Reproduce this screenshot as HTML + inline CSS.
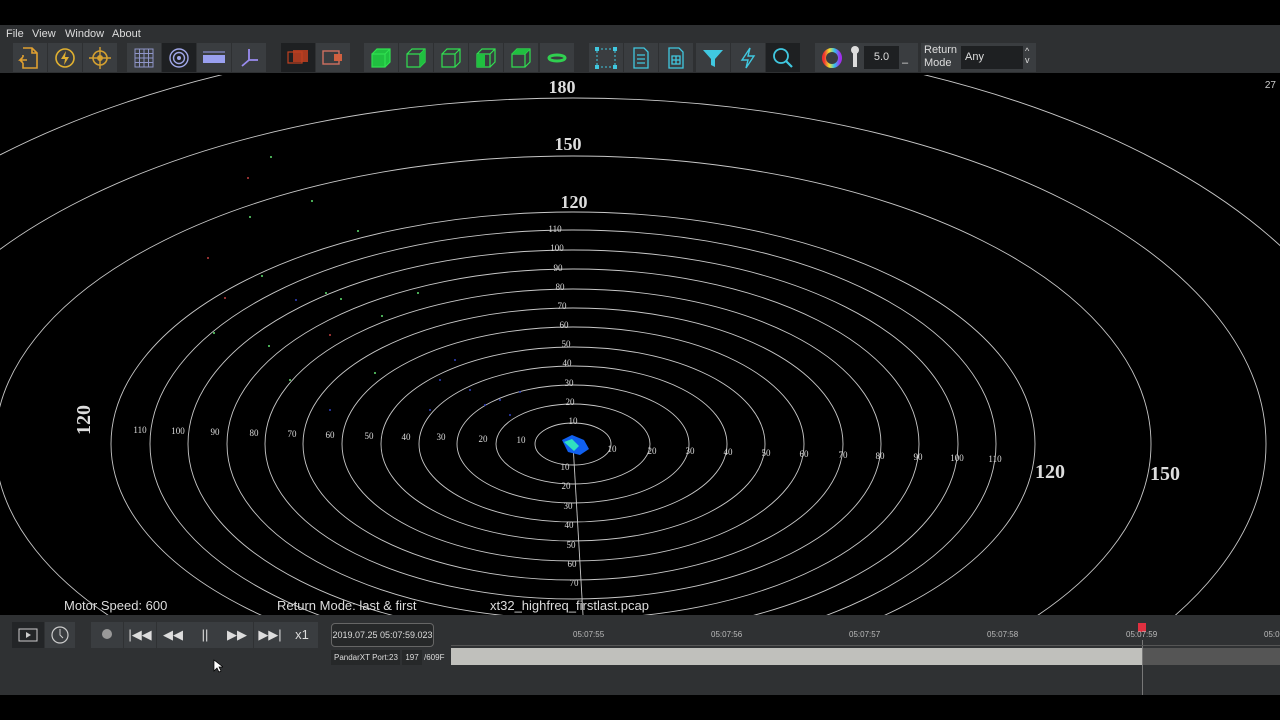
<!DOCTYPE html>
<html style="overflow:hidden;width:1280px;height:720px"><head><meta charset="utf-8"><style>
*{margin:0;padding:0;box-sizing:border-box}
body{width:1280px;height:720px;background:#000;overflow:hidden;font-family:"Liberation Sans",sans-serif;position:relative}
.menu{position:absolute;top:25px;left:0;width:1280px;height:17px;background:#2e3032;color:#ddd;font-size:11px}
.menu span{position:absolute;top:3px}
.tb{position:absolute;top:42px;left:0;width:1280px;height:31px;background:#2e3032}
.b{position:absolute;top:1px;width:34px;height:29px;background:#3a3d40}
.b svg{position:absolute;left:5px;top:3px}
.bottom{position:absolute;top:615px;left:0;width:1280px;height:80px;background:#2f3133}
.ov{position:absolute;color:#ddd;font-size:13px;top:598px}
.pb{position:absolute;top:622px;width:32px;height:26px;background:#3a3d40;color:#ddd;text-align:center;font-size:13px;line-height:26px}
</style></head><body>
<div class="menu"><span style="left:6px">File</span><span style="left:32px">View</span><span style="left:65px">Window</span><span style="left:112px">About</span></div>
<div class="tb">
<div class="b" style="left:13px"><svg width="24" height="24"><path d="M5 2h9l5 5v15H5v-5M5 11v-2" fill="none" stroke="#e0a030" stroke-width="1.6"/><path d="M14 2v5h5M9 14h-7l3-3M2 14l3 3" fill="none" stroke="#e0a030" stroke-width="1.6"/></svg></div>
<div class="b" style="left:48px"><svg width="24" height="24"><circle cx="12" cy="12" r="9" fill="none" stroke="#e0b030" stroke-width="1.6"/><path d="M13 5l-5 8h4l-1 6 5-8h-4z" fill="#e0b030"/></svg></div>
<div class="b" style="left:83px"><svg width="24" height="24"><circle cx="12" cy="12" r="7" fill="none" stroke="#d4a030" stroke-width="1.6"/><circle cx="12" cy="12" r="3" fill="#d4a030"/><path d="M12 1v22M1 12h22" stroke="#d4a030" stroke-width="1.4"/></svg></div>
<div class="b" style="left:127px"><svg width="24" height="24"><path d="M3 3h18v18H3zM7.5 3v18M12 3v18M16.5 3v18M3 7.5h18M3 12h18M3 16.5h18" fill="none" stroke="#8f95c8" stroke-width="1"/></svg></div>
<div class="b" style="left:162px;background:#1e2022"><svg width="24" height="24"><circle cx="12" cy="12" r="9" fill="none" stroke="#a0a6e8" stroke-width="1.4"/><circle cx="12" cy="12" r="5.5" fill="none" stroke="#a0a6e8" stroke-width="1.4"/><circle cx="12" cy="12" r="2" fill="#a0a6e8"/></svg></div>
<div class="b" style="left:197px"><svg width="24" height="24"><rect x="1" y="9" width="22" height="8" fill="#9aa0f0"/><path d="M1 6h22" stroke="#9aa0f0"/></svg></div>
<div class="b" style="left:232px"><svg width="24" height="24"><path d="M12 3v11l-7 6M12 14h9" fill="none" stroke="#9a8cf0" stroke-width="1.8"/></svg></div>
<div class="b" style="left:281px;background:#1e2022"><svg width="24" height="24"><rect x="2" y="6" width="14" height="11" fill="none" stroke="#c04020" stroke-width="1.2"/><rect x="7" y="4" width="15" height="12" fill="#c04020" opacity=".85"/></svg></div>
<div class="b" style="left:316px"><svg width="24" height="24"><rect x="2" y="5" width="16" height="13" fill="none" stroke="#d07060" stroke-width="1.4"/><rect x="13" y="8" width="8" height="7" fill="#d06040"/></svg></div>
<div class="b" style="left:364px"><svg width="24" height="24"><path d="M3 8h13v13H3zM3 8l5-5h13v13l-5 5M16 8l5-5" fill="#20c040" stroke="#30e050" stroke-width="1.2"/></svg></div>
<div class="b" style="left:399px"><svg width="24" height="24"><path d="M3 8h13v13H3zM3 8l5-5h13v13l-5 5M16 8l5-5" fill="none" stroke="#30e050" stroke-width="1.2"/><path d="M16 8l5-5v13l-5 5z" fill="#20c040"/></svg></div>
<div class="b" style="left:434px"><svg width="24" height="24"><path d="M3 8h13v13H3zM3 8l5-5h13v13l-5 5M16 8l5-5" fill="none" stroke="#30e050" stroke-width="1.2"/></svg></div>
<div class="b" style="left:469px"><svg width="24" height="24"><path d="M3 8h13v13H3zM3 8l5-5h13v13l-5 5M16 8l5-5" fill="none" stroke="#30e050" stroke-width="1.2"/><path d="M3 8h8v13H3z" fill="#20c040"/></svg></div>
<div class="b" style="left:504px"><svg width="24" height="24"><path d="M3 8h13v13H3zM3 8l5-5h13v13l-5 5M16 8l5-5" fill="none" stroke="#30e050" stroke-width="1.2"/><path d="M3 8l5-5h13l-5 5z" fill="#20c040"/></svg></div>
<div class="b" style="left:540px"><svg width="24" height="24"><path d="M4 12c0-4 16-4 16 0M20 12c0 4-16 4-16 0" fill="none" stroke="#30d050" stroke-width="3"/></svg></div>
<div class="b" style="left:589px"><svg width="24" height="24"><rect x="3" y="3" width="18" height="18" fill="none" stroke="#40c8e0" stroke-dasharray="2 2"/><g fill="#40c8e0"><rect x="1" y="1" width="4" height="4"/><rect x="19" y="1" width="4" height="4"/><rect x="1" y="19" width="4" height="4"/><rect x="19" y="19" width="4" height="4"/></g></svg></div>
<div class="b" style="left:624px"><svg width="24" height="24"><path d="M5 2h10l4 4v16H5z M8 9h8M8 13h8M8 17h8" fill="none" stroke="#40c8e0" stroke-width="1.3"/></svg></div>
<div class="b" style="left:659px"><svg width="24" height="24"><path d="M5 2h10l4 4v16H5z M8 10h8v8H8zM12 10v8M8 14h8" fill="none" stroke="#40c8e0" stroke-width="1.3"/></svg></div>
<div class="b" style="left:696px"><svg width="24" height="24"><path d="M2 4h20l-8 9v8l-4-2v-6z" fill="#40c8e0"/></svg></div>
<div class="b" style="left:731px"><svg width="24" height="24"><path d="M14 2L6 14h6l-2 8 8-12h-6z" fill="none" stroke="#40c8e0" stroke-width="1.4"/></svg></div>
<div class="b" style="left:766px;background:#1e2022"><svg width="24" height="24"><circle cx="10" cy="10" r="7" fill="none" stroke="#40c8e0" stroke-width="1.8"/><path d="M15 15l6 6" stroke="#40c8e0" stroke-width="2.2"/></svg></div>
<div class="b" style="left:815px;width:103px"><svg width="24" height="24"><circle cx="12" cy="12" r="8" fill="none" stroke="url(#g)" stroke-width="4"/><defs><linearGradient id="g"><stop offset="0" stop-color="#f03030"/><stop offset=".33" stop-color="#f0e030"/><stop offset=".66" stop-color="#30c0f0"/><stop offset="1" stop-color="#a030f0"/></linearGradient></defs></svg>
<div style="position:absolute;left:38px;top:6px;width:4px;height:18px;background:#ddd"></div><div style="position:absolute;left:36px;top:3px;width:8px;height:8px;border-radius:4px;background:#ddd"></div>
<div style="position:absolute;left:49px;top:3px;width:35px;height:23px;background:#1e2022;color:#ddd;font-size:11px;line-height:23px;text-align:center">5.0</div>
<div style="position:absolute;left:87px;top:14px;color:#ddd;font-size:11px">–</div></div>
<div class="b" style="left:921px;width:115px;color:#ddd;font-size:11px"><div style="position:absolute;left:3px;top:1px;line-height:13px">Return<br>Mode</div><div style="position:absolute;left:40px;top:3px;width:62px;height:23px;background:#1e2022;padding:5px 4px">Any</div><div style="position:absolute;left:104px;top:4px;font-size:9px;line-height:9px">^<br>v</div></div>
</div>
<div style="position:absolute;top:80px;right:4px;color:#ccc;font-size:10px">27</div>
<svg style="position:absolute;left:0;top:75px" width="1280" height="540" viewBox="0 75 1280 540">
<g fill="none" stroke="#c8c8c8" stroke-width="0.9">
<ellipse cx="573" cy="444" rx="38" ry="21"/><ellipse cx="573" cy="444" rx="77" ry="40"/><ellipse cx="573" cy="444" rx="116" ry="59"/><ellipse cx="573" cy="444" rx="154" ry="78"/><ellipse cx="573" cy="444" rx="192" ry="97"/><ellipse cx="573" cy="444" rx="231" ry="117"/><ellipse cx="573" cy="444" rx="270" ry="136"/><ellipse cx="573" cy="444" rx="308" ry="155"/><ellipse cx="573" cy="444" rx="346" ry="175"/><ellipse cx="573" cy="444" rx="385" ry="194"/><ellipse cx="573" cy="444" rx="423" ry="214"/>
<ellipse cx="573" cy="444" rx="462" ry="232"/><ellipse cx="573" cy="444" rx="578" ry="288"/><ellipse cx="573" cy="444" rx="693" ry="346"/><ellipse cx="573" cy="444" rx="808" ry="410"/>
<path d="M573 444L583 615"/></g>
<g fill="#ddd" font-family="Liberation Serif,serif" font-size="9" text-anchor="middle">
<text x="573" y="424">10</text><text x="570" y="405">20</text><text x="569" y="386">30</text><text x="567" y="366">40</text><text x="566" y="347">50</text><text x="564" y="328">60</text><text x="562" y="309">70</text><text x="560" y="290">80</text><text x="558" y="271">90</text><text x="557" y="251">100</text><text x="555" y="232">110</text>
<text x="565" y="470">10</text><text x="566" y="489">20</text><text x="568" y="509">30</text><text x="569" y="528">40</text><text x="571" y="548">50</text><text x="572" y="567">60</text><text x="574" y="586">70</text>
<text x="612" y="452">10</text><text x="652" y="454">20</text><text x="690" y="454">30</text><text x="728" y="455">40</text><text x="766" y="456">50</text><text x="804" y="457">60</text><text x="843" y="458">70</text><text x="880" y="459">80</text><text x="918" y="460">90</text><text x="957" y="461">100</text><text x="995" y="462">110</text>
<text x="521" y="443">10</text><text x="483" y="442">20</text><text x="441" y="440">30</text><text x="406" y="440">40</text><text x="369" y="439">50</text><text x="330" y="438">60</text><text x="292" y="437">70</text><text x="254" y="436">80</text><text x="215" y="435">90</text><text x="178" y="434">100</text><text x="140" y="433">110</text>
</g>
<g fill="#ddd" font-family="Liberation Serif,serif" font-weight="bold" font-size="18" text-anchor="middle">
<text x="562" y="93">180</text><text x="568" y="150">150</text><text x="574" y="208">120</text>
<text x="1050" y="478" font-size="20">120</text><text x="1165" y="480" font-size="20">150</text><text x="90" y="420" font-size="20" transform="rotate(-90 90 420)">120</text>
</g>
<g>
<path d="M562 440l10-5 12 5 5 9-9 6-12-3z" fill="#1060f0"/><path d="M564 442l8-3 7 7-5 5z" fill="#30e0c0"/>
<g fill="#60e070"><circle cx="271" cy="157" r="1"/><circle cx="312" cy="201" r="1"/><circle cx="250" cy="217" r="1"/><circle cx="358" cy="231" r="1"/><circle cx="262" cy="276" r="1"/><circle cx="326" cy="293" r="1"/><circle cx="341" cy="299" r="1"/><circle cx="382" cy="316" r="1"/><circle cx="269" cy="346" r="1"/><circle cx="290" cy="380" r="1"/><circle cx="375" cy="373" r="1"/><circle cx="418" cy="293" r="1"/><circle cx="214" cy="333" r="1"/></g>
<g fill="#3040c0"><circle cx="440" cy="380" r="1"/><circle cx="470" cy="390" r="1"/><circle cx="500" cy="400" r="1"/><circle cx="520" cy="392" r="1"/><circle cx="455" cy="360" r="1"/><circle cx="430" cy="410" r="1"/><circle cx="485" cy="405" r="1"/><circle cx="510" cy="415" r="1"/><circle cx="330" cy="410" r="1"/><circle cx="296" cy="300" r="1"/></g>
<g fill="#c04040"><circle cx="248" cy="178" r="1"/><circle cx="208" cy="258" r="1"/><circle cx="225" cy="298" r="1"/><circle cx="330" cy="335" r="1"/></g>
</g>
</svg>
<div class="ov" style="left:64px">Motor Speed: 600</div>
<div class="ov" style="left:277px">Return Mode: last &amp; first</div>
<div class="ov" style="left:490px">xt32_highfreq_firstlast.pcap</div>
<div class="bottom"></div>
<div class="pb" style="left:12px;background:#232527;top:622px"><svg width="20" height="16" style="margin-top:5px"><rect x="1" y="2" width="18" height="12" fill="none" stroke="#ccc"/><path d="M8 5l5 3-5 3z" fill="#ccc"/></svg></div>
<div class="pb" style="left:45px;width:30px"><svg width="20" height="20" style="margin-top:3px"><circle cx="10" cy="10" r="8" fill="none" stroke="#ccc" stroke-width="1.2"/><path d="M10 4v6l3 3" fill="none" stroke="#ccc"/></svg></div>
<div class="pb" style="left:91px"><span style="display:inline-block;width:10px;height:10px;border-radius:5px;background:#999"></span></div>
<div class="pb" style="left:124px">|◀◀</div>
<div class="pb" style="left:157px">◀◀</div>
<div class="pb" style="left:189px">||</div>
<div class="pb" style="left:221px">▶▶</div>
<div class="pb" style="left:254px">▶▶|</div>
<div class="pb" style="left:286px">x1</div>
<div style="position:absolute;left:331px;top:623px;width:103px;height:24px;border:1px solid #666;border-radius:4px;background:#262829;color:#ddd;font-size:9px;line-height:22px;text-align:center">2019.07.25 05:07:59.023</div>
<div style="position:absolute;left:331px;top:650px;width:69px;height:15px;background:#262829;color:#ddd;font-size:8px;line-height:15px;padding-left:3px">PandarXT Port:23</div>
<div style="position:absolute;left:402px;top:650px;width:20px;height:15px;background:#262829;color:#ddd;font-size:8px;line-height:15px;text-align:center">197</div>
<div style="position:absolute;left:424px;top:650px;color:#ddd;font-size:8px;line-height:15px">/609F</div>
<div style="position:absolute;left:451px;top:648px;width:691px;height:17px;background:#c0c0bc"></div>
<div style="position:absolute;left:1142px;top:648px;width:138px;height:17px;background:#555"></div>
<div style="position:absolute;left:1142px;top:640px;width:1px;height:55px;background:#777"></div>
<div style="position:absolute;left:451px;top:645px;width:829px;height:1px;background:#555"></div>
<div style="position:absolute;left:1138px;top:623px;width:8px;height:9px;background:#e03040"></div>
<div style="color:#bbb;font-size:8px;position:absolute;top:630px;left:573px">05:07:55</div>
<div style="color:#bbb;font-size:8px;position:absolute;top:630px;left:711px">05:07:56</div>
<div style="color:#bbb;font-size:8px;position:absolute;top:630px;left:849px">05:07:57</div>
<div style="color:#bbb;font-size:8px;position:absolute;top:630px;left:987px">05:07:58</div>
<div style="color:#bbb;font-size:8px;position:absolute;top:630px;left:1126px">05:07:59</div>
<div style="color:#bbb;font-size:8px;position:absolute;top:630px;left:1264px;white-space:nowrap;width:16px;overflow:hidden">05:08</div>
<svg style="position:absolute;left:213px;top:659px" width="10" height="14"><path d="M1 1v11l3-3 2 4 2-1-2-4h4z" fill="#fff" stroke="#000" stroke-width=".7"/></svg>
</body></html>
